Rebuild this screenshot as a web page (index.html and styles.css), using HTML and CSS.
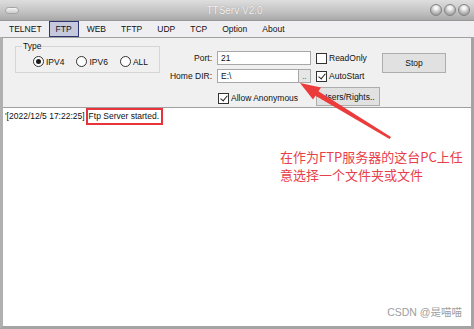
FILE: index.html
```html
<!DOCTYPE html>
<html lang="zh-CN">
<head>
    <meta charset="UTF-8">
    <title>TTServ V2.0</title>
    <link rel="stylesheet" href="styles.css">
</head>
<body>
    <div class="window">
        <div class="titlebar">
            <span class="pill"></span>
            <span class="title">TTServ V2.0</span>
            <div class="lights">
                <span class="light"></span>
                <span class="light"></span>
                <span class="light"></span>
            </div>
        </div>

        <div class="menubar">
            <span class="menu-item">TELNET</span>
            <span class="menu-item active">FTP</span>
            <span class="menu-item">WEB</span>
            <span class="menu-item">TFTP</span>
            <span class="menu-item">UDP</span>
            <span class="menu-item">TCP</span>
            <span class="menu-item">Option</span>
            <span class="menu-item">About</span>
        </div>

        <div class="frame">
            <div class="panel">
                <div class="type-group">
                    <span class="legend">Type</span>
                    <label class="radio"><span class="dot checked"></span>IPV4</label>
                    <label class="radio"><span class="dot"></span>IPV6</label>
                    <label class="radio"><span class="dot"></span>ALL</label>
                </div>

                <div class="form">
                    <span class="field-label">Port:</span>
                    <div class="textbox">21</div>
                    <label class="check"><span class="box"></span>ReadOnly</label>
                    <div class="button stop">Stop</div>

                    <span class="field-label">Home DIR:</span>
                    <div class="dir-row">
                        <div class="textbox grow">E:\</div>
                        <div class="browse">..</div>
                    </div>
                    <label class="check"><span class="box ticked"></span>AutoStart</label>

                    <span></span>
                    <label class="check anon"><span class="box ticked"></span>Allow Anonymous</label>
                    <div class="button users">Users/Rights..</div>
                </div>
            </div>

            <div class="log">
                <div class="log-line">'[2022/12/5 17:22:25]<span class="mark">Ftp Server started.</span></div>
            </div>
        </div>

        <!-- annotation drawn over the screenshot -->
        <svg class="arrow" width="474" height="329" viewBox="0 0 474 329">
            <polygon points="391,137 389.5,139 315,95.5 318,91" fill="#ec3b3b"/>
            <polygon points="300,83 321,87.5 313,99.5" fill="#ec3b3b"/>
        </svg>
        <div class="note">在作为FTP服务器的这台PC上任<br>意选择一个文件夹或文件</div>
        <div class="watermark">CSDN @是喵喵</div>
    </div>
</body>
</html>
```

FILE: styles.css
```css
body {
    margin: 0;
    padding: 0;
    background: #ffffff;
    font-family: "Liberation Sans", Arial, sans-serif;
}
.window {
    position: relative;
    width: 474px;
    height: 329px;
    display: flex;
    flex-direction: column;
    overflow: hidden;
    background: #f0f0f0;
}
.titlebar {
    height: 20px;
    display: flex;
    align-items: center;
    justify-content: space-between;
    padding: 0 4px 0 5px;
    background: linear-gradient(#dedede, #c2c2c2 60%, #a9a9a9);
    border-bottom: 1px solid #979797;
}
.pill {
    width: 12px;
    height: 5px;
    border: 1px solid #a4a4a4;
    border-radius: 4px;
    background: linear-gradient(#f4f4f4, #cccccc);
}
.title {
    font-size: 10px;
    color: #f2f2f2;
    text-shadow: 0 0 1px #8e8e8e;
    margin-left: 20px;
}
.lights {
    display: flex;
    gap: 2px;
}
.light {
    width: 12px;
    height: 12px;
    border-radius: 50%;
    background: radial-gradient(circle at 50% 30%, #f8f8f8 15%, #bcbcbc 55%, #868686 100%);
    border: 1px solid #848484;
    box-sizing: border-box;
}
.menubar {
    height: 16px;
    display: flex;
    align-items: center;
    padding-left: 4px;
    background: #efeff2;
    font-size: 8.5px;
    color: #111111;
}
.menu-item {
    padding: 2px 4px;
    margin-right: 5px;
    border: 1px solid transparent;
}
.menu-item.active {
    padding: 2px 6px;
    margin-left: -3px;
    margin-right: 3px;
    background: #c6c9de;
    border-color: #2e3470;
}
.frame {
    flex: 1;
    display: flex;
    flex-direction: column;
    border-left: 3px solid #b0b0b0;
    border-right: 3px solid #a4a4a4;
    border-bottom: 3px solid #a4a4a4;
    border-top: 1px solid #a0a0a0;
}
.panel {
    height: 69px;
    display: flex;
    align-items: flex-start;
    background: #f0f0f0;
    border-bottom: 1px solid #a0a0a0;
    font-size: 8.5px;
    color: #111111;
}
.type-group {
    position: relative;
    box-sizing: border-box;
    width: 145px;
    height: 27px;
    margin: 8px 0 0 12px;
    padding: 4px 0 0 17px;
    border: 1px solid #d6d6d6;
    display: flex;
    align-items: center;
}
.legend {
    position: absolute;
    left: 6px;
    top: -6px;
    padding: 0 1px;
    background: #f0f0f0;
}
.radio {
    display: flex;
    align-items: center;
    margin-right: 12px;
}
.dot {
    width: 11px;
    height: 11px;
    box-sizing: border-box;
    border: 1px solid #333333;
    border-radius: 50%;
    background: #ffffff;
    margin-right: 2px;
    display: flex;
    align-items: center;
    justify-content: center;
}
.dot.checked::after {
    content: "";
    width: 5px;
    height: 5px;
    border-radius: 50%;
    background: #1a1a1a;
}
.form {
    margin: 13px 0 0 5px;
    display: grid;
    grid-template-columns: 47px 94px 65px 60px;
    grid-template-rows: 14px 14px 19px;
    column-gap: 5px;
    row-gap: 4px;
    align-items: center;
}
.field-label {
    text-align: right;
}
.textbox {
    height: 14px;
    box-sizing: border-box;
    border: 1px solid #a8a8a8;
    background: #ffffff;
    padding: 0 3px;
    line-height: 12px;
}
.dir-row {
    display: flex;
}
.grow {
    flex: 1;
}
.browse {
    width: 12px;
    height: 14px;
    box-sizing: border-box;
    border: 1px solid #a8a8a8;
    border-left: none;
    background: #e6e6e6;
    font-size: 7px;
    text-align: center;
    line-height: 14px;
}
.check {
    display: flex;
    align-items: center;
}
.box {
    width: 11px;
    height: 11px;
    box-sizing: border-box;
    border: 1px solid #333333;
    background: #ffffff;
    margin-right: 2px;
    position: relative;
}
.box.ticked::after {
    content: "";
    position: absolute;
    left: 3px;
    top: 0;
    width: 3px;
    height: 6px;
    border: solid #222222;
    border-width: 0 1px 1px 0;
    transform: rotate(40deg);
}
.anon {
    margin-left: 1px;
    margin-top: 3px;
}
.button {
    box-sizing: border-box;
    border: 1px solid #adadad;
    background: #e1e1e1;
    display: flex;
    align-items: center;
    justify-content: center;
}
.stop {
    grid-row: 1 / span 2;
    grid-column: 4;
    height: 20px;
    margin-left: -4px;
    margin-top: 2px;
    align-self: start;
}
.users {
    height: 19px;
    margin-right: 1px;
}
.log {
    flex: 1;
    background: #ffffff;
    font-size: 8.5px;
    color: #111111;
}
.log-line {
    padding: 0 0 0 2px;
    line-height: 17px;
}
.mark {
    display: inline-block;
    margin-left: 1px;
    padding: 0 2px 0 1px;
    height: 13px;
    line-height: 13px;
    border: 2px solid #e8333c;
    vertical-align: top;
}
.arrow {
    position: absolute;
    left: 0;
    top: 0;
    pointer-events: none;
}
.note {
    position: absolute;
    left: 280px;
    top: 148px;
    font-family: "Noto Sans CJK SC", sans-serif;
    font-size: 13px;
    line-height: 18px;
    color: #e8404a;
}
.watermark {
    position: absolute;
    right: 12px;
    bottom: 10px;
    font-family: "Liberation Sans", "Noto Sans CJK SC", sans-serif;
    font-size: 10.5px;
    color: #9e9e9e;
}
```
